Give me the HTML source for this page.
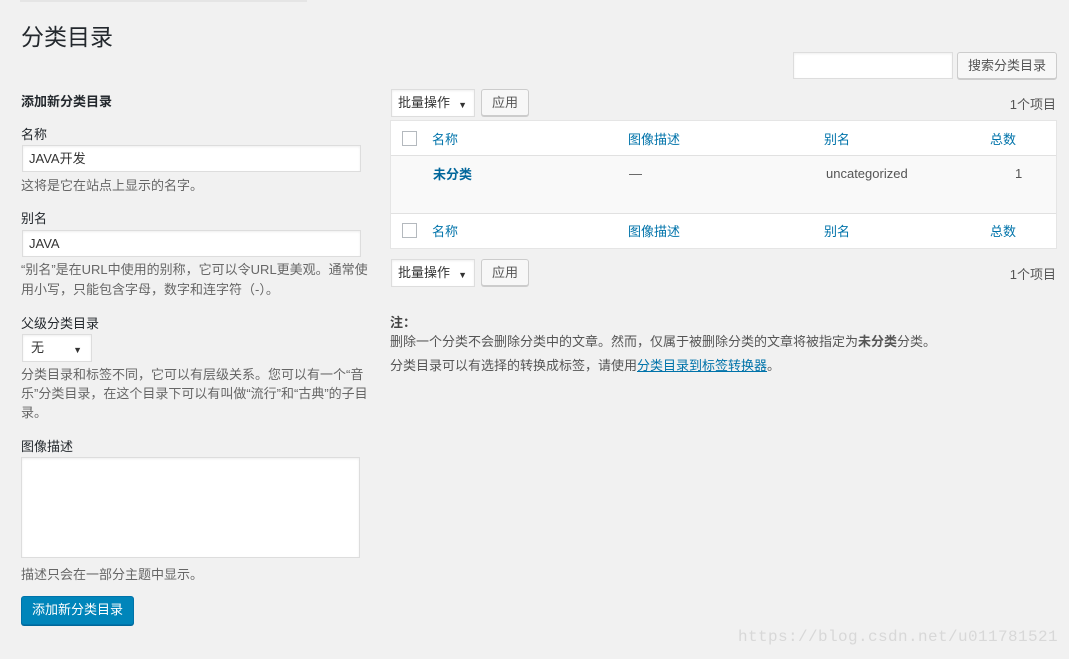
<!DOCTYPE html>
<html><head><meta charset="utf-8"><style>
body{margin:0;width:1069px;height:659px;background:#f1f1f1;font-family:"Liberation Sans","Noto Sans CJK SC",sans-serif;font-size:13px;color:#444;position:relative;overflow:hidden}
.a{position:absolute;white-space:nowrap}
.inp{position:absolute;background:#fff;border:1px solid #ddd;box-shadow:inset 0 1px 2px rgba(0,0,0,.07);box-sizing:border-box}
.btn{position:absolute;background:#f7f7f7;border:1px solid #ccc;border-radius:3px;box-shadow:0 1px 0 #ccc;box-sizing:border-box;text-align:center;color:#555;font-size:13px}
.help{color:#666;font-size:13px;line-height:19px}
.lnk{color:#0073aa}
.cb{position:absolute;width:15px;height:15px;border:1px solid #b4b9be;background:#fff;box-sizing:border-box}
</style></head><body>
<div class="a" style="left:20px;top:0;width:287px;height:2px;background:#e5e5e5"></div>
<div class="a" style="left:21px;top:18px;font-size:23px;color:#23282d">分类目录</div>

<div class="inp" style="left:793px;top:52px;width:160px;height:27px"></div>
<div class="btn" style="left:957px;top:52px;width:100px;height:27px;line-height:25px">搜索分类目录</div>

<div class="a" style="left:21px;top:91px;font-weight:bold;color:#23282d">添加新分类目录</div>
<div class="a" style="left:21px;top:124px;color:#23282d">名称</div>
<div class="inp" style="left:22px;top:145px;width:339px;height:27px;padding:2px 6px;line-height:21px;color:#333">JAVA开发</div>
<div class="a help" style="left:21px;top:176px">这将是它在站点上显示的名字。</div>
<div class="a" style="left:21px;top:208px;color:#23282d">别名</div>
<div class="inp" style="left:22px;top:230px;width:339px;height:27px;padding:2px 6px;line-height:21px;color:#333">JAVA</div>
<div class="a help" style="left:21px;top:260px;white-space:normal;width:356px;line-height:20px">“别名”是在URL中使用的别称，它可以令URL更美观。通常使用小写，只能包含字母，数字和连字符（-）。</div>
<div class="a" style="left:21px;top:313px;color:#23282d">父级分类目录</div>
<div class="inp" style="left:22px;top:334px;width:70px;height:28px;padding:3px 8px;line-height:20px;color:#333">无<span style="position:absolute;right:9px;top:5px;font-size:9px">▼</span></div>
<div class="a help" style="left:21px;top:365px;white-space:normal;width:355px">分类目录和标签不同，它可以有层级关系。您可以有一个“音乐”分类目录，在这个目录下可以有叫做“流行”和“古典”的子目录。</div>
<div class="a" style="left:21px;top:436px;color:#23282d">图像描述</div>
<div class="inp" style="left:21px;top:457px;width:339px;height:101px"></div>
<div class="a help" style="left:21px;top:565px">描述只会在一部分主题中显示。</div>
<div class="a" style="left:21px;top:596px;width:113px;height:29px;background:#0085ba;border:1px solid #0073aa;border-radius:3px;box-sizing:border-box;color:#fff;text-align:center;line-height:26px;box-shadow:0 1px 0 #006799">添加新分类目录</div>

<div class="inp" style="left:391px;top:89px;width:84px;height:28px;padding:3px 6px;line-height:20px;color:#333">批量操作<span style="position:absolute;right:7px;top:5px;font-size:9px">▼</span></div>
<div class="btn" style="left:481px;top:89px;width:48px;height:27px;line-height:25px">应用</div>
<div class="a" style="right:13px;top:94px;color:#555">1个项目</div>

<div class="a" style="left:390px;top:120px;width:667px;height:129px;background:#fff;border:1px solid #e5e5e5;box-sizing:border-box"></div>
<div class="a" style="left:391px;top:155px;width:665px;height:57px;background:#f9f9f9;border-top:1px solid #e1e1e1;border-bottom:1px solid #e1e1e1"></div>
<div class="cb" style="left:402px;top:131px"></div>
<div class="a lnk" style="left:432px;top:129px">名称</div>
<div class="a lnk" style="left:628px;top:129px">图像描述</div>
<div class="a lnk" style="left:824px;top:129px">别名</div>
<div class="a lnk" style="left:990px;top:129px">总数</div>
<div class="a lnk" style="left:433px;top:164px;font-weight:bold;color:#00669b">未分类</div>
<div class="a" style="left:629px;top:166px;color:#555">—</div>
<div class="a" style="left:826px;top:166px;color:#555">uncategorized</div>
<div class="a" style="left:1015px;top:166px;color:#555">1</div>
<div class="cb" style="left:402px;top:223px"></div>
<div class="a lnk" style="left:432px;top:221px">名称</div>
<div class="a lnk" style="left:628px;top:221px">图像描述</div>
<div class="a lnk" style="left:824px;top:221px">别名</div>
<div class="a lnk" style="left:990px;top:221px">总数</div>

<div class="inp" style="left:391px;top:259px;width:84px;height:28px;padding:3px 6px;line-height:20px;color:#333">批量操作<span style="position:absolute;right:7px;top:5px;font-size:9px">▼</span></div>
<div class="btn" style="left:481px;top:259px;width:48px;height:27px;line-height:25px">应用</div>
<div class="a" style="right:13px;top:264px;color:#555">1个项目</div>

<div class="a" style="left:390px;top:312px;font-weight:bold;color:#444">注：</div>
<div class="a" style="left:390px;top:331px;color:#555">删除一个分类不会删除分类中的文章。然而，仅属于被删除分类的文章将被指定为<b>未分类</b>分类。</div>
<div class="a" style="left:390px;top:355px;color:#555">分类目录可以有选择的转换成标签，请使用<span class="lnk" style="text-decoration:underline">分类目录到标签转换器</span>。</div>

<div class="a" style="left:738px;top:628px;font-family:'Liberation Mono',monospace;font-size:16px;letter-spacing:0.4px;color:#d8d8d8">https://blog.csdn.net/u011781521</div>
</body></html>
